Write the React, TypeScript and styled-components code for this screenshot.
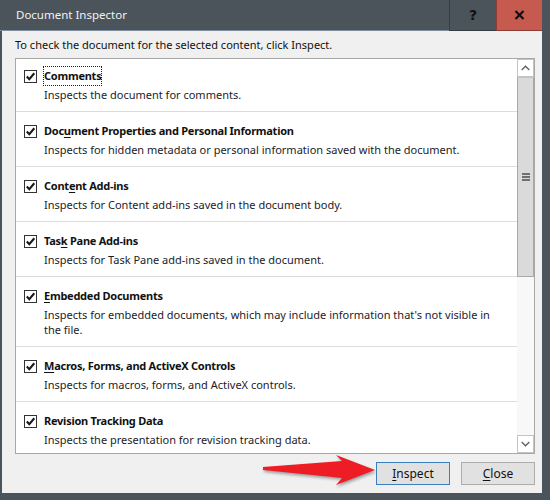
import React from "react";
import styled, { createGlobalStyle } from "styled-components";

const GlobalStyle = createGlobalStyle`
  html, body {
    margin: 0;
    padding: 0;
    background: #4b545a;
  }
  body {
    font-family: "Noto Sans", "Open Sans", sans-serif;
  }
`;

interface Item {
  title: string;
  key: number;
  desc: string;
  focused?: boolean;
}

const items: Item[] = [
  { title: "Comments", key: -1, desc: "Inspects the document for comments.", focused: true },
  {
    title: "Document Properties and Personal Information",
    key: 3,
    desc: "Inspects for hidden metadata or personal information saved with the document.",
  },
  { title: "Content Add-ins", key: 4, desc: "Inspects for Content add-ins saved in the document body." },
  { title: "Task Pane Add-ins", key: 3, desc: "Inspects for Task Pane add-ins saved in the document." },
  {
    title: "Embedded Documents",
    key: 0,
    desc: "Inspects for embedded documents, which may include information that's not visible in the file.",
  },
  { title: "Macros, Forms, and ActiveX Controls", key: 0, desc: "Inspects for macros, forms, and ActiveX controls." },
  { title: "Revision Tracking Data", key: -1, desc: "Inspects the presentation for revision tracking data." },
];

const Screen = styled.div`
  position: relative;
  width: 550px;
  height: 500px;
  overflow: hidden;
  background: #4b545a;
`;

const Window = styled.div`
  width: 542px;
  height: 493px;
  display: flex;
  flex-direction: column;
`;

const TitleBar = styled.div`
  height: 31px;
  display: flex;
  align-items: stretch;
  background: #4b545a;
`;

const Title = styled.div`
  flex: 1;
  padding-left: 16px;
  display: flex;
  align-items: center;
  color: #f2f2f2;
  font-size: 11.5px;
  padding-bottom: 2px;
  border-bottom: 1px solid #7f8f9e;
`;

const CaptionButton = styled.div<{ $close?: boolean }>`
  width: ${(p) => (p.$close ? 46 : 47)}px;
  display: flex;
  align-items: center;
  justify-content: center;
  background: ${(p) => (p.$close ? "#c65a4f" : "#4b545a")};
  border-left: 1px solid ${(p) => (p.$close ? "#8e3d36" : "#363d42")};
  border-bottom: 1px solid ${(p) => (p.$close ? "#8e3d36" : "#363d42")};
  box-sizing: border-box;
  color: #111;
  font-family: "DejaVu Sans", sans-serif;
  font-weight: bold;
  font-size: 14px;
`;

const Body = styled.div`
  flex: 1;
  margin-left: 2px;
  background: #f0f0f0;
  padding: 5px 7px 0 13px;
  display: flex;
  flex-direction: column;
`;

const Intro = styled.div`
  height: 18px;
  line-height: 18px;
  font-size: 11px;
  color: #111;
  margin-bottom: 4px;
`;

const ListBox = styled.div`
  height: 396px;
  box-sizing: border-box;
  border: 1px solid #a8a8a8;
  background: #fff;
  display: flex;
`;

const Rows = styled.div`
  flex: 1;
  overflow: hidden;
  & > div:first-child {
    padding-top: 8px;
  }
`;

const Row = styled.div`
  display: grid;
  grid-template-columns: 13px 1fr;
  column-gap: 7px;
  padding: 10px 10px 9px 8px;
  border-bottom: 1px solid #dcdcdc;
`;

const CheckBox = styled.div`
  width: 13px;
  height: 13px;
  box-sizing: border-box;
  border: 1px solid #333;
  background: #fff;
  margin-top: 3px;
  display: flex;
  align-items: center;
  justify-content: center;
`;

const RowTitle = styled.div<{ $focused?: boolean }>`
  justify-self: start;
  font-weight: bold;
  font-size: 11px;
  letter-spacing: -0.25px;
  line-height: 18px;
  color: #111;
  margin-bottom: 2px;
  outline: ${(p) => (p.$focused ? "1px dotted #222" : "none")};
`;

const RowDesc = styled.div`
  grid-column: 2;
  font-size: 11px;
  line-height: 15px;
  color: #1c1c2a;
`;

const Key = styled.span`
  text-decoration: underline;
  text-underline-offset: 2px;
`;

const ScrollBar = styled.div`
  width: 17px;
  display: flex;
  flex-direction: column;
  background: #f8f8f8;
`;

const ArrowBox = styled.div`
  height: 18px;
  box-sizing: border-box;
  border: 1px solid #c4c4c4;
  background: #fff;
  display: flex;
  align-items: center;
  justify-content: center;
`;

const Thumb = styled.div`
  height: 200px;
  box-sizing: border-box;
  border: 1px solid #a8a8a8;
  border-top-color: #c4c4c4;
  background: #dadada;
  display: flex;
  align-items: center;
  justify-content: center;
`;

const Track = styled.div`
  flex: 1;
`;

const Grip = styled.div`
  width: 8px;
  height: 8px;
  background: repeating-linear-gradient(to bottom, #6f6f6f 0 2px, transparent 2px 3px);
`;

const Footer = styled.div`
  display: flex;
  justify-content: flex-end;
  gap: 11px;
  margin-top: 8px;
`;

const Button = styled.div<{ $default?: boolean }>`
  width: 74px;
  height: 23px;
  box-sizing: border-box;
  border: 1px solid ${(p) => (p.$default ? "#3b7fc0" : "#adadad")};
  background: #e1e1e1;
  display: flex;
  align-items: center;
  justify-content: center;
  font-size: 12px;
  color: #111;
`;

const Arrow = styled.svg`
  position: absolute;
  left: 258px;
  top: 452px;
  filter: drop-shadow(1px 2px 1.5px rgba(0, 0, 0, 0.35));
`;

const withKey = (text: string, key: number) =>
  key < 0 ? (
    text
  ) : (
    <>
      {text.slice(0, key)}
      <Key>{text[key]}</Key>
      {text.slice(key + 1)}
    </>
  );

export default function App() {
  return (
    <Screen>
      <GlobalStyle />
      <Window>
        <TitleBar>
          <Title>Document Inspector</Title>
          <CaptionButton>?</CaptionButton>
          <CaptionButton $close>
            <svg width="11" height="10" viewBox="0 0 11 10">
              <path d="M1.5 1 L9.5 9 M9.5 1 L1.5 9" stroke="#111" strokeWidth="2.2" />
            </svg>
          </CaptionButton>
        </TitleBar>
        <Body>
          <Intro>To check the document for the selected content, click Inspect.</Intro>
          <ListBox>
            <Rows>
              {items.map((it) => (
                <Row key={it.title}>
                  <CheckBox>
                    <svg width="11" height="11" viewBox="0 0 11 11">
                      <path d="M1.8 5.6 L4.3 8.2 L9.3 2.3" fill="none" stroke="#1a1a1a" strokeWidth="2.1" />
                    </svg>
                  </CheckBox>
                  <RowTitle $focused={it.focused}>{withKey(it.title, it.key)}</RowTitle>
                  <RowDesc>{it.desc}</RowDesc>
                </Row>
              ))}
            </Rows>
            <ScrollBar>
              <ArrowBox>
                <svg width="9" height="6" viewBox="0 0 9 6">
                  <path d="M0.7 5 L4.5 1.2 L8.3 5" fill="none" stroke="#606060" strokeWidth="1.3" />
                </svg>
              </ArrowBox>
              <Thumb>
                <Grip />
              </Thumb>
              <Track />
              <ArrowBox>
                <svg width="9" height="6" viewBox="0 0 9 6">
                  <path d="M0.7 1 L4.5 4.8 L8.3 1" fill="none" stroke="#606060" strokeWidth="1.3" />
                </svg>
              </ArrowBox>
            </ScrollBar>
          </ListBox>
          <Footer>
            <Button $default>{withKey("Inspect", 0)}</Button>
            <Button>{withKey("Close", 0)}</Button>
          </Footer>
        </Body>
      </Window>
      <Arrow width="120" height="36" viewBox="0 0 120 36">
        <polygon points="5,15 84,9 78,3 117,18 78,33 84,26 5,18" fill="#ee1c24" />
      </Arrow>
    </Screen>
  );
}
